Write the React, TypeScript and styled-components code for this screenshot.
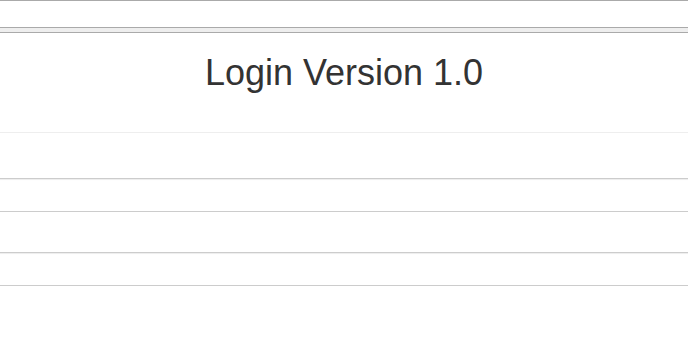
import React from 'react';
import styled, { createGlobalStyle } from 'styled-components';

const GlobalStyle = createGlobalStyle`
  html, body {
    margin: 0;
    padding: 0;
    background: #fff;
    overflow: hidden;
  }
  body {
    font-family: "Liberation Sans", Arial, sans-serif;
    color: #333;
  }
`;

const Page = styled.div`
  width: 688px;
  height: 361px;
  overflow: hidden;
  border-top: 1px solid #aaa;
  box-sizing: border-box;
`;

const FrameBar = styled.div`
  margin-top: 26px;
  height: 4px;
  background: #eee;
  border-top: 1px solid #aaa;
  border-bottom: 1px solid #aaa;
`;

const Header = styled.div`
  height: 100px;
  box-sizing: border-box;
  padding-top: 20px;
  border-bottom: 1px solid #eee;
`;

const Title = styled.h1`
  margin: 0;
  font-size: 36px;
  font-weight: 400;
  line-height: 1.1;
  text-align: center;
  color: #333;
`;

const Form = styled.form`
  display: flex;
  flex-direction: column;
  gap: 40px;
  padding-top: 45px;
`;

const Input = styled.input`
  display: block;
  box-sizing: border-box;
  margin: 0 -20px;
  width: calc(100% + 40px);
  height: 34px;
  padding: 6px 12px;
  border: 1px solid #ccc;
  background: #fff;
  box-shadow: inset 0 1px 1px rgba(0, 0, 0, 0.075);
  outline: none;
  font-family: inherit;
  font-size: 14px;
`;

const App: React.FC = () => {
  return (
    <>
      <GlobalStyle />
      <Page>
        <FrameBar />
        <Header>
          <Title>Login Version 1.0</Title>
        </Header>
        <Form>
          <Input type="text" aria-label="username" />
          <Input type="password" aria-label="password" />
        </Form>
      </Page>
    </>
  );
};

export default App;
